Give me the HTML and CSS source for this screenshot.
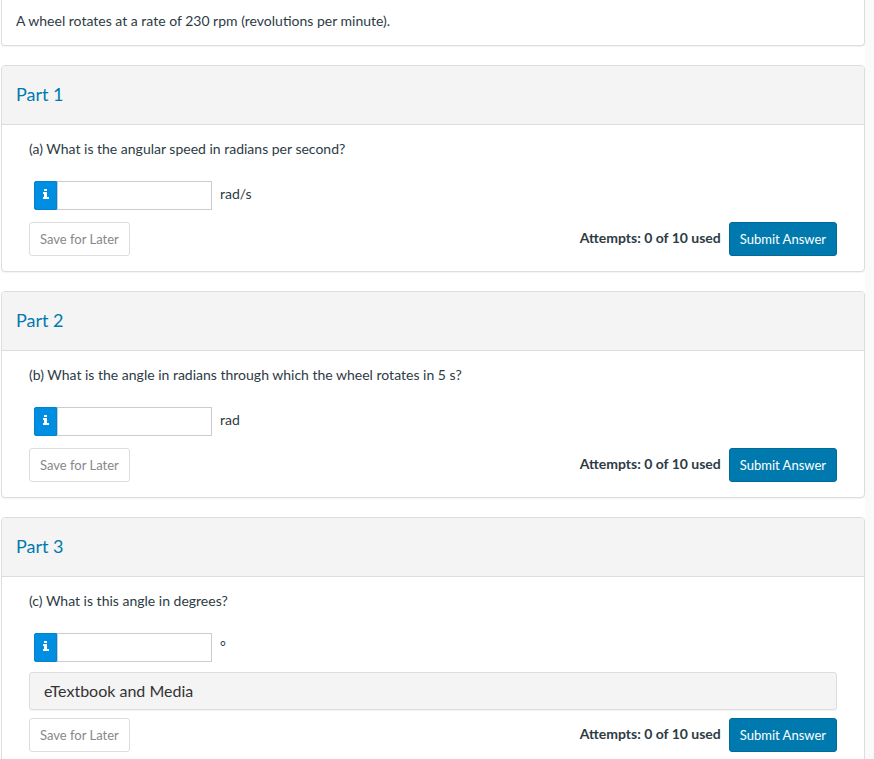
FILE: index.html
```html
<!DOCTYPE html>
<html lang="en">
<head>
  <meta charset="UTF-8" />
  <meta name="viewport" content="width=device-width, initial-scale=1.0" />
  <title>Question</title>
  <link rel="stylesheet" href="styles.css">
</head>
<body>
  <main class="question">

    <!-- Question stem -->
    <section class="panel stem">
      <p>A wheel rotates at a rate of 230 rpm (revolutions per minute).</p>
    </section>

    <!-- Part 1 -->
    <section class="panel">
      <h2 class="panel-heading">Part 1</h2>
      <form class="panel-body">
        <label class="prompt" for="answer1">(a) What is the angular speed in radians per second?</label>
        <div class="answer">
          <button type="button" class="info" aria-label="Input information">
            <svg width="6" height="10" viewBox="0 0 6 10" aria-hidden="true"><path d="M1 0h3v2H1zM0 3h4v5h2v2H0V8h1V5H0z" fill="currentColor"/></svg>
          </button>
          <input type="text" id="answer1" class="answer-input">
          <span class="unit">rad/s</span>
        </div>
        <div class="actions">
          <button type="button" class="btn">Save for Later</button>
          <span class="attempts">Attempts: 0 of 10 used</span>
          <button type="submit" class="btn btn-primary">Submit Answer</button>
        </div>
      </form>
    </section>

    <!-- Part 2 -->
    <section class="panel">
      <h2 class="panel-heading">Part 2</h2>
      <form class="panel-body">
        <label class="prompt" for="answer2">(b) What is the angle in radians through which the wheel rotates in 5 s?</label>
        <div class="answer">
          <button type="button" class="info" aria-label="Input information">
            <svg width="6" height="10" viewBox="0 0 6 10" aria-hidden="true"><path d="M1 0h3v2H1zM0 3h4v5h2v2H0V8h1V5H0z" fill="currentColor"/></svg>
          </button>
          <input type="text" id="answer2" class="answer-input">
          <span class="unit">rad</span>
        </div>
        <div class="actions">
          <button type="button" class="btn">Save for Later</button>
          <span class="attempts">Attempts: 0 of 10 used</span>
          <button type="submit" class="btn btn-primary">Submit Answer</button>
        </div>
      </form>
    </section>

    <!-- Part 3 -->
    <section class="panel">
      <h2 class="panel-heading">Part 3</h2>
      <form class="panel-body">
        <label class="prompt" for="answer3">(c) What is this angle in degrees?</label>
        <div class="answer">
          <button type="button" class="info" aria-label="Input information">
            <svg width="6" height="10" viewBox="0 0 6 10" aria-hidden="true"><path d="M1 0h3v2H1zM0 3h4v5h2v2H0V8h1V5H0z" fill="currentColor"/></svg>
          </button>
          <input type="text" id="answer3" class="answer-input">
          <span class="unit">°</span>
        </div>
        <button type="button" class="media">eTextbook and Media</button>
        <div class="actions">
          <button type="button" class="btn">Save for Later</button>
          <span class="attempts">Attempts: 0 of 10 used</span>
          <button type="submit" class="btn btn-primary">Submit Answer</button>
        </div>
      </form>
    </section>

  </main>
</body>
</html>
```

FILE: styles.css
```css
* {
  box-sizing: border-box;
}

body {
  margin: 0;
  background-color: #fafafa;
  color: #2d3b45;
  font-family: Lato, sans-serif;
  font-size: 14px;
  line-height: 20px;
}

.question {
  margin-right: 9px;
  padding-left: 1px;
  background-color: #fff;
}

.panel {
  margin-bottom: 19px;
  background-color: #fff;
  border: 1px solid #ddd;
  border-radius: 4px;
  box-shadow: 0 1px 1px rgba(0, 0, 0, 0.05);
}

.stem {
  padding: 11px 14px 14px;
  border-top: none;
  border-radius: 0 0 4px 4px;
}

.stem p {
  margin: 0;
}

.panel-heading {
  margin: 0;
  padding: 18px 14px 20px;
  background-color: #f4f4f4;
  border-bottom: 1px solid #ddd;
  border-radius: 3px 3px 0 0;
  color: #007aae;
  font-size: 18px;
  font-weight: 400;
  line-height: 20px;
}

.panel-body {
  padding: 14px 27px 15px;
}

.prompt {
  display: block;
}

.answer {
  display: flex;
  margin: 22px 0 12px 5px;
}

.info {
  width: 23px;
  height: 29px;
  padding: 0 0 2px;
  background-color: #008ee2;
  border: 1px solid #0084d2;
  border-radius: 2px 0 0 2px;
  color: #fff;
  cursor: pointer;
}

.answer-input {
  width: 155px;
  height: 29px;
  padding: 4px 8px;
  border: 1px solid #ccc;
  font: inherit;
}

.unit {
  margin: 3px 0 0 8px;
}

.media {
  display: block;
  width: 100%;
  margin: 0 0 8px;
  padding: 8px 14px;
  background-color: #f4f4f4;
  border: 1px solid #ddd;
  border-radius: 3px;
  box-shadow: 0 1px 1px rgba(0, 0, 0, 0.05);
  color: #333;
  font-family: inherit;
  font-size: 16px;
  line-height: 20px;
  text-align: left;
  cursor: pointer;
}

.answer + .media {
  margin-top: -2px;
}

.actions {
  display: flex;
  align-items: center;
}

.attempts {
  margin: 0 8px 0 auto;
  padding-bottom: 2px;
  font-weight: 700;
}

.btn {
  padding: 6px 10px;
  background-color: #fff;
  border: 1px solid #ddd;
  border-radius: 3px;
  color: #888;
  font-family: inherit;
  font-size: 13px;
  line-height: 20px;
  cursor: pointer;
}

.btn-primary {
  background-color: #007aae;
  border-color: #006a98;
  color: #fff;
}
```
